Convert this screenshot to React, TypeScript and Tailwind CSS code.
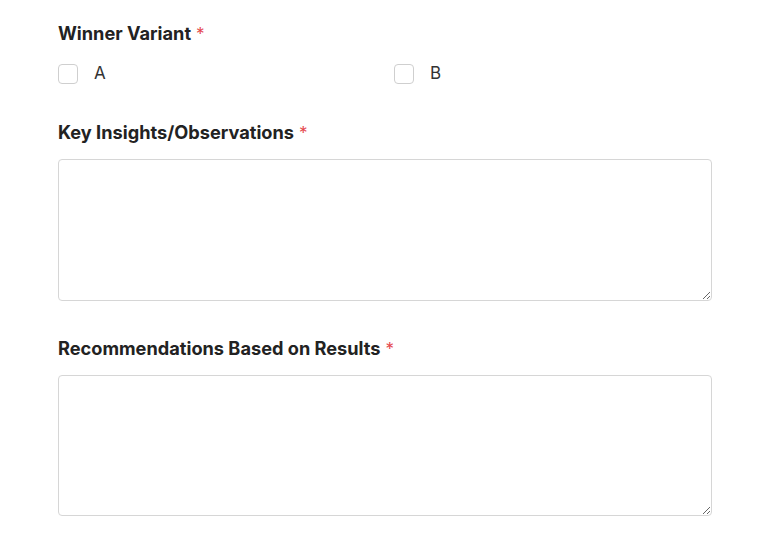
import React from 'react'

function Label({ children }: { children: React.ReactNode }) {
  return (
    <div className="text-[18.2px] leading-6 font-bold text-[#222222]">
      {children}
      <span className="ml-[5px] text-[#e5484d] font-normal text-[17px]">*</span>
    </div>
  )
}

function Check({ label }: { label: string }) {
  return (
    <label className="flex items-center gap-4 h-5">
      <span className="w-5 h-5 rounded-[4px] border border-[#cfcfcf] bg-white" />
      <span className="text-[17px] text-[#333333]">{label}</span>
    </label>
  )
}

export default function App() {
  return (
    <div className="w-[768px] h-[556px] bg-white pl-[58px] pt-[21px]" style={{ fontFamily: 'Inter, "Liberation Sans", sans-serif' }}>
      <div className="w-[654px]">
        <Label>Winner Variant</Label>
        <div className="grid grid-cols-2 gap-x-[18px] mt-[18px]">
          <Check label="A" />
          <Check label="B" />
        </div>

        <div className="mt-[36px]">
          <Label>Key Insights/Observations</Label>
        </div>
        <textarea className="mt-[14px] block w-full h-[142px] rounded-[4px] border border-[#d6d6d6] bg-white" />

        <div className="mt-[35px]">
          <Label>Recommendations Based on Results</Label>
        </div>
        <textarea className="mt-[14px] block w-full h-[141px] rounded-[4px] border border-[#d6d6d6] bg-white" />
      </div>
    </div>
  )
}
